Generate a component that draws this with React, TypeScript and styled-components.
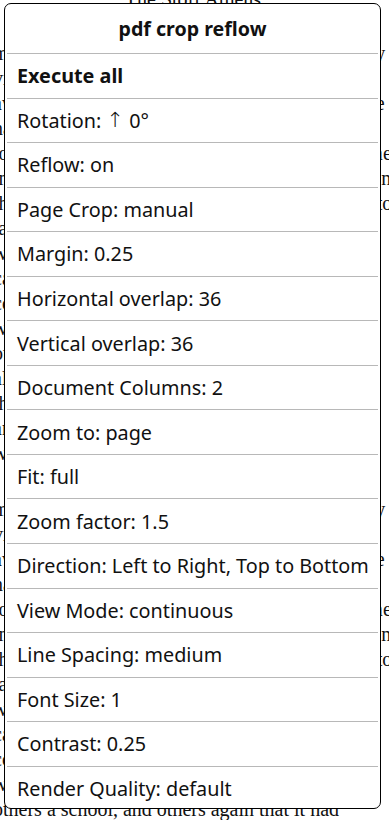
import React from 'react'
import styled, { createGlobalStyle } from 'styled-components'

const GlobalStyle = createGlobalStyle`
  html, body {
    margin: 0;
    padding: 0;
    background: #ffffff;
  }
  #root {
    height: 820px;
  }
`

const items = [
  { label: 'Execute all', bold: true },
  { label: 'Rotation: ', arrow: true, rest: ' 0\u00b0' },
  { label: 'Reflow: on' },
  { label: 'Page Crop: manual' },
  { label: 'Margin: 0.25' },
  { label: 'Horizontal overlap: 36' },
  { label: 'Vertical overlap: 36' },
  { label: 'Document Columns: 2' },
  { label: 'Zoom to: page' },
  { label: 'Fit: full' },
  { label: 'Zoom factor: 1.5' },
  { label: 'Direction: Left to Right, Top to Bottom' },
  { label: 'View Mode: continuous' },
  { label: 'Line Spacing: medium' },
  { label: 'Font Size: 1' },
  { label: 'Contrast: 0.25' },
  { label: 'Render Quality: default' },
]

// the book page under the menu, only its edges show
const pageText =
  'The Stoff Athens was at that time one of the most curious places in the town, and of the many visitors who came there in the season, few went away without some opinion on it. ' +
  'Its rooms were narrow, its halls were long, and the windows looked out over the harbour where the ships came in from the south with wine and oil and timber. ' +
  'In the evenings the men would gather on the steps to talk of the day, of prices and of weather; the women sat in the doorways with their work, calling now and then to the children. ' +
  'Nobody could say when the house was first built, nor by whom; some held that it had been a warehouse, others a school, and others again that it had always been what it was now. ' +
  'What is certain is that in the year of the great storm it lost its roof, and that the new one, put up in haste before the winter, leaked for a dozen years after. '

export default function App() {
  return (
    <>
      <GlobalStyle />
      <Screen>
        <BookPage>
          <Heading>The Stoff Athens</Heading>
          <Paragraph>{pageText}</Paragraph>
          <Paragraph>{pageText}</Paragraph>
        </BookPage>
        <Menu>
          <Title>pdf crop reflow</Title>
          {items.map((item) => (
            <Item key={item.label} $bold={item.bold}>
              {item.label}
              {item.arrow && <Arrow>{'\u2191'}</Arrow>}
              {item.rest}
            </Item>
          ))}
        </Menu>
      </Screen>
    </>
  )
}

const Screen = styled.div`
  position: relative;
  width: 389px;
  height: 820px;
  overflow: hidden;
  background: #ffffff;
`

const BookPage = styled.div`
  margin: 0 -4px 0 -7px;
  font-family: 'Liberation Serif', 'Times New Roman', serif;
  font-size: 20px;
  line-height: 25px;
  color: #111;
  text-align: left;
`

const Heading = styled.div`
  margin-top: -13px;
  margin-bottom: 4px;
  text-align: center;
`

const Paragraph = styled.p`
  margin: 0 0 6px;
  text-indent: 24px;
`

const Menu = styled.div`
  position: absolute;
  top: 3px;
  left: 4px;
  width: 375px;
  height: 804px;
  border: 1px solid #000;
  border-radius: 7px;
  background: #ffffff;
  display: flex;
  flex-direction: column;
  overflow: hidden;
  font-family: 'Noto Sans', 'Open Sans', sans-serif;
  color: #111;
`

const Title = styled.div`
  height: 49px;
  flex: none;
  display: flex;
  align-items: center;
  justify-content: center;
  font-size: 19.6px;
  font-weight: 700;
`

const Item = styled.div<{ $bold?: boolean }>`
  flex: none;
  height: 43.55px;
  margin: 0 2px;
  padding-left: 10px;
  border-top: 1px solid #b8b8b8;
  display: flex;
  align-items: center;
  font-size: 19.8px;
  font-weight: ${(p) => (p.$bold ? 700 : 400)};
  white-space: pre;
`

const Arrow = styled.span`
  font-family: 'DejaVu Sans', sans-serif;
  font-size: 21px;
  font-weight: 300;
`
